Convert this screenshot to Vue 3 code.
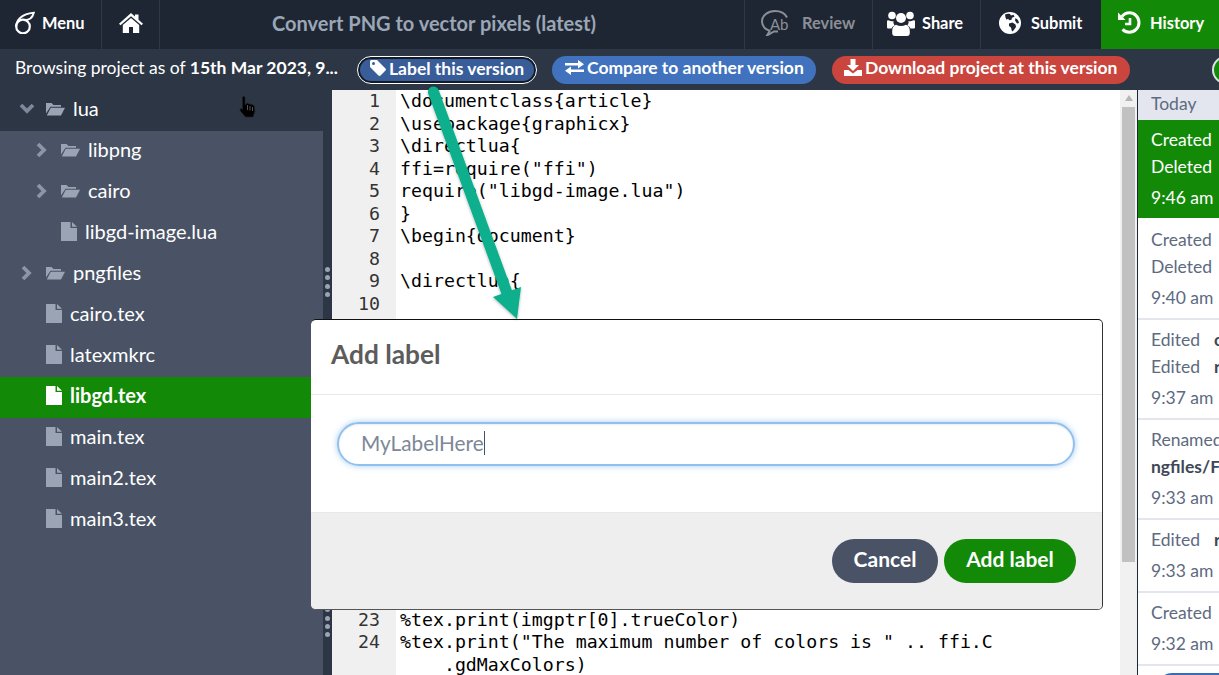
<script setup>
const tree = [
  { name: 'lua', type: 'folder', depth: 0, open: true, dark: true },
  { name: 'libpng', type: 'folder', depth: 1 },
  { name: 'cairo', type: 'folder', depth: 1 },
  { name: 'libgd-image.lua', type: 'file', depth: 1 },
  { name: 'pngfiles', type: 'folder', depth: 0 },
  { name: 'cairo.tex', type: 'file', depth: 0 },
  { name: 'latexmkrc', type: 'file', depth: 0 },
  { name: 'libgd.tex', type: 'file', depth: 0, active: true },
  { name: 'main.tex', type: 'file', depth: 0 },
  { name: 'main2.tex', type: 'file', depth: 0 },
  { name: 'main3.tex', type: 'file', depth: 0 }
]

const rows = [
  { n: 1, t: '\\documentclass{article}' },
  { n: 2, t: '\\usepackage{graphicx}' },
  { n: 3, t: '\\directlua{' },
  { n: 4, t: 'ffi=require("ffi")' },
  { n: 5, t: 'require("libgd-image.lua")' },
  { n: 6, t: '}' },
  { n: 7, t: '\\begin{document}' },
  { n: 8, t: '' },
  { n: 9, t: '\\directlua{' },
  { n: 10, t: '' },
  { n: 11, t: '  t' },
  ...Array.from({ length: 12 }, (_, i) => ({ n: '', t: '', key: 'h' + i })),
  { n: 23, t: '%tex.print(imgptr[0].trueColor)' },
  { n: 24, t: '%tex.print("The maximum number of colors is " .. ffi.C' },
  { n: '', t: '    .gdMaxColors)', key: 'w' }
]

const history = [
  { lines: [['Created', ''], ['Deleted', '']], time: '9:46 am', active: true },
  { lines: [['Created', ''], ['Deleted', '']], time: '9:40 am' },
  { lines: [['Edited', 'c'], ['Edited', 'r']], time: '9:37 am' },
  { lines: [['Renamed', ''], ['', 'ngfiles/F']], time: '9:33 am' },
  { lines: [['Edited', 'r']], time: '9:33 am' },
  { lines: [['Created', '']], time: '9:32 am' }
]
</script>

<template>
  <div class="app">
    <header class="topbar">
      <div class="nav-cell menu">
        <svg class="logo" viewBox="0 0 22 23" width="22" height="23">
          <circle cx="10" cy="15.500" r="6.800" fill="none" stroke="#fff" stroke-width="2.200"/>
          <path d="M3.200 16C3 9 8.500 3 20.800 1.800c-1 4.200-4.200 7.400-9.300 7.400" fill="none" stroke="#fff" stroke-width="1.900"/>
        </svg>
        <span>Menu</span>
      </div>
      <div class="nav-cell home">
        <svg viewBox="0 0 24 20" width="24" height="20">
          <path d="M12 0 16 3.600V1.500h3.500v5.300L24 10.800l-1.500 1.500L12 3.200 1.500 12.300 0 10.800z" fill="#fff"/>
          <path d="M12 5 3.800 12.100V20H10v-6h4v6h6.200v-7.900z" fill="#fff"/>
        </svg>
      </div>
      <div class="title">Convert PNG to vector pixels (latest)</div>
      <div class="nav-cell review">
        <svg viewBox="0 0 33 26" width="33" height="26">
          <path d="M9 21C3.500 19 1 15.500 1 11.500 1 5.500 7 1 14 1c5.500 0 10 2.500 12 6.500" fill="none" stroke="#8b8f97" stroke-width="2"/>
          <path d="M9 20.500 6 25.500l7-4h4" fill="none" stroke="#8b8f97" stroke-width="2"/>
          <text x="9" y="20" class="review-ab">Ab</text>
        </svg>
        <span>Review</span>
      </div>
      <div class="nav-cell share">
        <svg viewBox="0 0 28 26" width="28" height="26" fill="#fff">
          <circle cx="5" cy="5.500" r="3.800"/>
          <circle cx="23" cy="5.500" r="3.800"/>
          <circle cx="14" cy="8" r="5"/>
          <path d="M0 11.500c0-1 1-1.500 2-1 1.500.8 3 1 4.500.4-.4 1.800.2 3.200 1.300 4.500C6 16 5 17 4.600 18.500H1.500C.5 18.500 0 18 0 17z"/>
          <path d="M28 11.500c0-1-1-1.500-2-1-1.500.8-3 1-4.500.4.400 1.800-.2 3.200-1.300 4.500 1.800.6 2.800 1.600 3.200 3.100h3.100c1 0 1.500-.5 1.500-1.500z"/>
          <path d="M9 14.800c3 1.700 7 1.700 10 0 2.500 1 3.800 3 3.800 6.200v2c0 1.800-1 3-2.800 3H8c-1.800 0-2.800-1.200-2.800-3v-2c0-3.200 1.300-5.200 3.800-6.200z"/>
        </svg>
        <span>Share</span>
      </div>
      <div class="nav-cell submit">
        <svg viewBox="0 0 22 22" width="22" height="22">
          <circle cx="11" cy="11" r="11" fill="#fff"/>
          <path d="M6 2.500c2-1 4-1 5-.5l1 1.500 2.500-.8 1 2-2.500 1-.5 2-2 .5-1.500-1.500-1.500 1L6.500 5.500zM10 11.500l3.500-1 3 2 .5 2.500-2.500 3.500-1.500 1-1-4-2-1.500zM16.500 6l2.500 2 1 3-2 .5-2-3z" fill="#1f2533"/>
        </svg>
        <span>Submit</span>
      </div>
      <div class="nav-cell hist">
        <svg viewBox="0 0 24 23" width="24" height="23" fill="none" stroke="#fff" stroke-width="3">
          <path d="M5 5.500C7 3 9.500 1.800 12.500 1.800c5 0 9.500 4.300 9.500 9.700s-4.500 9.700-9.700 9.700c-2.800 0-5-1-6.800-2.800"/>
          <path d="M13 7v6H8" stroke-width="2.600"/>
          <path d="M1 1.500V9h7.500z" fill="#fff" stroke="none"/>
        </svg>
        <span>History</span>
      </div>
    </header>

    <div class="toolbar">
      <div class="browsing">Browsing project as of <b>15th Mar 2023, 9...</b></div>
      <div class="pill-ring">
        <button class="pill label">
          <svg viewBox="0 0 16 16" width="16" height="16"><path d="M0 1.500C0 .7.700 0 1.500 0H7l8.500 8.500c.6.600.6 1.400 0 2l-5 5c-.6.600-1.400.6-2 0L0 7zM3.500 5a1.500 1.500 0 1 0 0-3 1.500 1.500 0 0 0 0 3z" fill="#fff" fill-rule="evenodd"/></svg>
          Label this version
        </button>
      </div>
      <button class="pill compare">
        <svg viewBox="0 0 19 15" width="19" height="15" fill="#fff"><path d="M0 3h13V0l6 4.200-6 4.300V5.400H0zM19 9.500v2.400H6V15L0 10.700l6-4.200v3z"/></svg>
        Compare to another version
      </button>
      <button class="pill download">
        <svg viewBox="0 0 18 17" width="18" height="17" fill="#fff"><path d="M6.500 0h5v6H15L9 12 3 6h3.500z"/><path d="M0 11h4.500L9 14.500 13.500 11H18v6H0z"/></svg>
        Download project at this version
      </button>
      <div class="toggle"></div>
    </div>

    <main class="workspace">
      <aside class="sidebar">
        <div
          v-for="item in tree"
          :key="item.name"
          class="tree-row"
          :class="{ dark: item.dark, active: item.active }"
          :style="{ paddingLeft: 16 + item.depth * 15 + 'px' }"
        >
          <span class="chev-slot">
            <svg v-if="item.type === 'folder' && item.open" class="chev down" viewBox="0 0 16 11" width="16" height="11"><path d="M2 2l6 6 6-6" fill="none" stroke="currentColor" stroke-width="3.800"/></svg>
            <svg v-else-if="item.type === 'folder'" class="chev" viewBox="0 0 11 16" width="11" height="16"><path d="M2 2l6 6-6 6" fill="none" stroke="currentColor" stroke-width="3.800"/></svg>
          </span>
          <svg v-if="item.type === 'folder'" class="ico folder" viewBox="0 0 19 14" width="19" height="14"><path d="M0 1h5.500l2 2H15v1.800H4.500L0 11.500z"/><path d="M4.800 5.800H19L15 13.500H.8z"/></svg>
          <svg v-else class="ico file" viewBox="0 0 16 19" width="16" height="19"><path d="M0 0h9.500v6H16v13H0z"/><path d="M11 0l5 4.800h-5z"/></svg>
          <span class="tree-name">{{ item.name }}</span>
        </div>
      </aside>

      <div class="splitter">
        <div class="dots"><i></i><i></i><i></i><i></i></div>
        <div class="dots lower"><i></i><i></i><i></i><i></i></div>
      </div>

      <section class="editor">
        <div v-for="r in rows" :key="r.key || r.n" class="code-row">
          <span class="gutter">{{ r.n }}</span>
          <span class="code">{{ r.t }}</span>
        </div>
      </section>

      <div class="scrollbar">
        <div class="scroll-arrow"></div>
        <div class="scroll-thumb"></div>
      </div>

      <aside class="history">
        <div class="today">Today</div>
        <div v-for="(h, i) in history" :key="i" class="entry" :class="{ active: h.active }">
          <div v-for="(l, j) in h.lines" :key="j" class="change">
            <span v-if="l[0]" class="verb">{{ l[0] }}</span><b v-if="l[1]">{{ l[1] }}</b>
          </div>
          <div class="time">{{ h.time }}</div>
        </div>
        <div class="hist-pill"></div>
      </aside>
    </main>

    <div class="modal">
      <div class="modal-head">Add label</div>
      <div class="modal-body">
        <div class="input"><span>MyLabelHere</span><i class="caret"></i></div>
      </div>
      <div class="modal-foot">
        <button class="m-btn cancel">Cancel</button>
        <button class="m-btn add">Add label</button>
      </div>
    </div>

    <svg class="arrow" viewBox="0 0 1219 675" width="1219" height="675">
      <defs>
        <filter id="as" x="-30%" y="-10%" width="160%" height="120%">
          <feDropShadow dx="0" dy="1" stdDeviation="1.500" flood-color="#000" flood-opacity=".3"/>
        </filter>
      </defs>
      <g filter="url(#as)">
        <path d="M433.500 92 507 293" fill="none" stroke="#0aaf8d" stroke-width="11" stroke-linecap="round"/>
        <path d="M493 297 521 287 517 319z" fill="#0aaf8d"/>
      </g>
    </svg>

    <svg class="cursor" viewBox="0 0 17 22" width="17" height="22">
      <path d="M4.500 0.500c1 0 1.500.6 1.500 1.500v7l1-.4V7.500l1.600-.3.900.8 1.500-.3 1 1 1.500-.2 1.800 1.500.5 5.500-1.800 5.500H6.500L1 14.500l.3-1.500 1.200-.5 1 1V2c0-1 .4-1.500 1-1.500z" fill="#000" stroke="#222" stroke-width=".6"/>
      <path d="M8.500 9v5M11 10v4.500M13.500 11v4" stroke="#777" stroke-width=".7"/>
    </svg>
  </div>
</template>

<style scoped>
.app {
  position: relative;
  width: 100vw;
  height: 100vh;
  overflow: hidden;
  display: flex;
  flex-direction: column;
  font-family: Lato, "Open Sans", sans-serif;
  background: #fff;
}
.topbar {
  flex: 0 0 49px;
  display: flex;
  align-items: stretch;
  background: #1f2633;
  color: #fff;
  font-size: 16.400px;
  font-weight: 700;
}
.nav-cell {
  flex: none;
  display: flex;
  align-items: center;
  border-right: 1px solid #2f3847;
  box-sizing: border-box;
  padding-bottom: 4px;
}
.menu { width: 102px; padding-left: 13px; gap: 7px; }
.home { width: 58px; justify-content: center; }
.title {
  flex: 1;
  display: flex;
  align-items: center;
  justify-content: center;
  padding: 0 36px 4px 0;
  color: #9ba6b6;
  font-size: 20px;
  font-weight: 700;
}
.review {
  width: 129px;
  padding-left: 16px;
  gap: 8px;
  color: #8b8f97;
  border-left: 1px solid #2f3847;
}
.review-ab { font: 400 15px Lato, sans-serif; fill: #8b8f97; }
.share { width: 108px; padding-left: 14px; gap: 7px; }
.submit { width: 120px; padding-left: 18px; gap: 10px; border-right: 0; }
.hist { width: 118px; background: #138a07; padding-left: 16px; gap: 9px; border-right: 0; }

.toolbar {
  flex: 0 0 41px;
  display: flex;
  align-items: flex-start;
  padding-top: 7px;
  box-sizing: border-box;
  padding-left: 15px;
  background: #2c3645;
  color: #fff;
  font-size: 17.500px;
}
.browsing { width: 342px; flex: none; line-height: 23px; white-space: nowrap; }
.pill-ring {
  flex: none;
  width: 180px;
  height: 28px;
  box-sizing: border-box;
  border: 1px solid #fff;
  border-radius: 14px;
  padding: 2px;
  margin-right: 15px;
  background: #141a26;
}
.pill {
  display: flex;
  align-items: center;
  gap: 3px;
  border: 0;
  margin: 0;
  color: #fff;
  font-family: inherit;
  font-size: 17.500px;
  font-weight: 700;
  border-radius: 14px;
  white-space: nowrap;
  height: 28px;
  flex: none;
  box-sizing: border-box;
}
.label { width: 100%; height: 100%; background: #385d99; border-radius: 12px; padding: 0 0 4px 10px; }
.compare { width: 264px; background: #4172bd; padding: 0 0 5px 13px; margin-right: 16px; }
.download { width: 298px; background: #c9453e; padding: 0 0 5px 12px; margin-right: 82px; }
.toggle {
  flex: none;
  width: 36px;
  height: 28px;
  box-sizing: border-box;
  border: 2px solid #d9e0e6;
  border-radius: 14px;
  background: #138a07;
}

.workspace { flex: 1; min-height: 0; display: flex; }
.sidebar { flex: 0 0 323px; background: #495365; color: #fff; font-size: 20px; }
.tree-row {
  height: 41px;
  display: flex;
  align-items: center;
  box-sizing: border-box;
  padding-bottom: 4px;
}
.tree-name { margin-bottom: 2px; }
.tree-row.dark { background: #2c3645; }
.tree-row.active { background: #138a07; font-weight: 700; }
.chev-slot { flex: 0 0 30px; display: flex; align-items: center; padding-left: 5px; box-sizing: border-box; }
.chev { color: #8b96a7; }
.chev.down { margin-left: -2px; color: #7d899b; }
.ico { flex: none; fill: #9aa4b4; margin-right: 8px; }
.active .ico { fill: #fff; }
.splitter {
  flex: 0 0 9px;
  background: #2c3645;
  display: flex;
  flex-direction: column;
  align-items: center;
  padding-top: 177px;
  box-sizing: border-box;
}
.dots { display: flex; flex-direction: column; gap: 3.400px; }
.dots.lower { margin-top: 310px; }
.dots i { width: 5px; height: 5px; border-radius: 50%; background: #9aa4b4; }

.editor {
  flex: 1;
  min-width: 0;
  overflow: hidden;
  font-family: "DejaVu Sans Mono", monospace;
  font-size: 18.240px;
  line-height: 22.550px;
  color: #000;
  background: linear-gradient(to right, #f0f0f0 64px, #fff 64px);
}
.code-row { display: flex; height: 22.550px; white-space: pre; }
.gutter { flex: 0 0 64px; box-sizing: border-box; padding-right: 16px; text-align: right; color: #333; }
.code { padding-left: 4px; }

.scrollbar {
  flex: 0 0 17px;
  box-sizing: border-box;
  background: #f1f1f1;
  padding: 0 2px;
  display: flex;
  flex-direction: column;
}
.scroll-arrow {
  width: 0;
  height: 0;
  margin: 5px auto 6px;
  border-left: 4px solid transparent;
  border-right: 4px solid transparent;
  border-bottom: 6px solid #b5b5b5;
}
.scroll-thumb { height: 455px; background: #c1c1c1; }

.history {
  flex: 0 0 82px;
  box-sizing: border-box;
  border-left: 1px solid #1f2633;
  background: #fff;
  overflow: hidden;
  color: #5d6a7f;
  font-size: 17.500px;
  white-space: nowrap;
}
.today { height: 30px; line-height: 27px; background: #e3e6ee; padding-left: 13px; }
.entry { padding: 6px 0 7px 13px; border-bottom: 2px solid #e3e6ee; }
.entry.active { background: #138a07; color: #fff; border-bottom-color: #fff; }
.change { height: 27px; line-height: 27px; }
.verb { margin-right: 14px; }
.change b { color: #3e4756; }
.time { height: 27px; line-height: 27px; margin-top: 4px; }
.hist-pill { height: 30px; margin: 7px 0 0 19px; width: 100px; border-radius: 15px; background: #3a6bb5; }

.modal {
  position: absolute;
  left: 311px;
  top: 319px;
  width: 792px;
  height: 291px;
  box-sizing: border-box;
  display: flex;
  flex-direction: column;
  background: #fff;
  border-radius: 5px;
  border-top: 1px solid #111;
  border-right: 1px solid #333;
  border-bottom: 1px solid #555;
}
.modal-head {
  flex: 0 0 75px;
  box-sizing: border-box;
  padding-left: 20px;
  line-height: 68px;
  font-size: 26.300px;
  font-weight: 700;
  color: #5c5c5c;
  border-bottom: 1px solid #e8e8e8;
}
.modal-body { flex: 1; padding: 27px 27px 0 26px; box-sizing: border-box; }
.input {
  display: flex;
  align-items: center;
  height: 44px;
  box-sizing: border-box;
  padding: 0 0 3px 22px;
  border: 2px solid #8fc0ee;
  border-radius: 22px;
  box-shadow: 0 0 6px rgba(130, 184, 236, .7), inset 0 1px 2px rgba(0, 0, 0, .08);
  font-size: 20.800px;
  color: #7d8797;
}
.caret { width: 1px; height: 24px; background: #46506a; }
.modal-foot {
  flex: 0 0 97px;
  box-sizing: border-box;
  display: flex;
  justify-content: flex-end;
  align-items: flex-start;
  gap: 6px;
  padding: 26px 26px 0 0;
  background: #eeeeee;
  border-top: 1px solid #e8e8e8;
  border-radius: 0 0 5px 5px;
}
.m-btn {
  height: 44px;
  border: 0;
  border-radius: 22px;
  color: #fff;
  font-family: inherit;
  font-size: 21px;
  font-weight: 700;
  box-sizing: border-box;
  padding: 0 0 5px;
}
.cancel { width: 106px; background: #495365; }
.add { width: 132px; background: #138a07; }

.arrow { position: absolute; left: 0; top: 0; pointer-events: none; }
.cursor { position: absolute; left: 239px; top: 96px; pointer-events: none; }
</style>

<style>
html, body { margin: 0; height: 100%; overflow: hidden; }
</style>
